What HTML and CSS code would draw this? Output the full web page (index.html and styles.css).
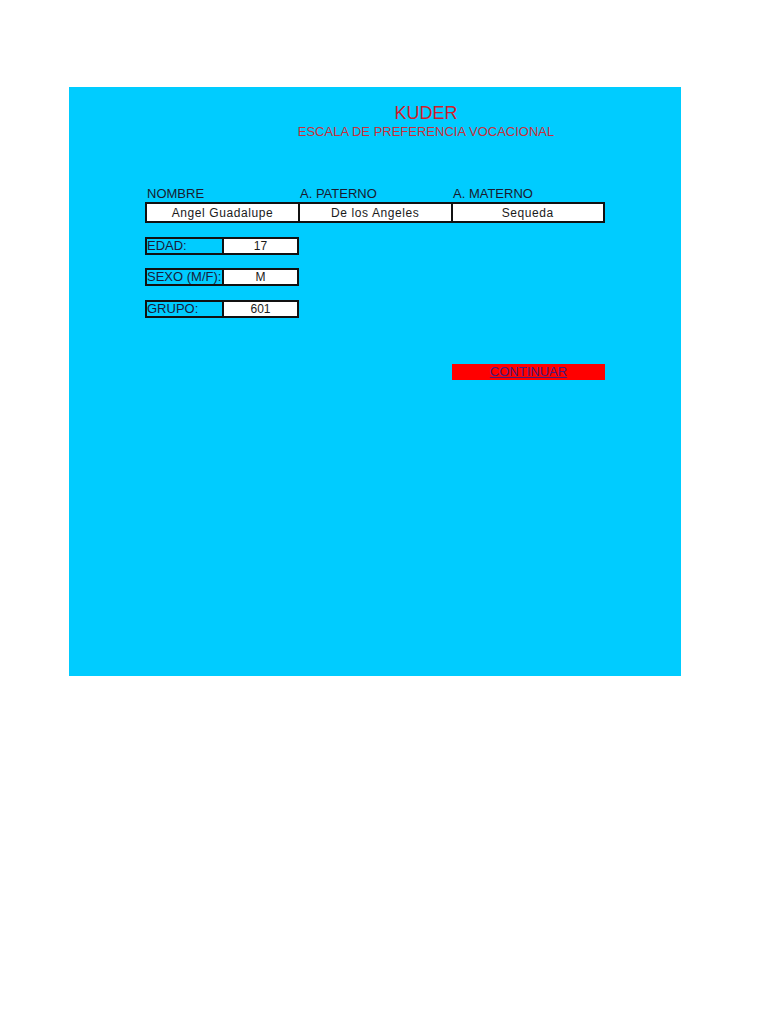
FILE: index.html
```html
<!DOCTYPE html>
<html lang="es">
<head>
<meta charset="utf-8">
<title>KUDER</title>
<link rel="stylesheet" href="styles.css">
</head>
<body>
<div class="panel">
  <div class="title">
    <div class="kuder">KUDER</div>
    <div class="subtitle">ESCALA DE PREFERENCIA VOCACIONAL</div>
  </div>
  <div class="content">
    <div class="labels">
      <div class="lbl">NOMBRE</div>
      <div class="lbl">A. PATERNO</div>
      <div class="lbl">A. MATERNO</div>
    </div>
    <div class="names">
      <div class="cell">Angel Guadalupe</div>
      <div class="cell">De los Angeles</div>
      <div class="cell">Sequeda</div>
    </div>
    <div class="field"><div class="flab">EDAD:</div><div class="fval">17</div></div>
    <div class="field"><div class="flab">SEXO (M/F):</div><div class="fval">M</div></div>
    <div class="field field-last"><div class="flab">GRUPO:</div><div class="fval">601</div></div>
    <div class="actions">
      <a class="continuar" href="#">CONTINUAR</a>
    </div>
  </div>
</div>
</body>
</html>
```

FILE: styles.css
```css
html, body {
  margin: 0;
  padding: 0;
  background: #ffffff;
}
body {
  font-family: "Liberation Sans", Arial, sans-serif;
  color: #1a1a2e;
}
.panel {
  margin-left: 69px;
  margin-top: 87px;
  width: 612px;
  height: 589px;
  background: #00ccff;
  box-sizing: border-box;
  padding-top: 16px;
}
.title {
  width: 300px;
  margin-left: 207px;
  text-align: center;
}
.kuder {
  font-size: 18px;
  line-height: 21px;
  color: #d0202a;
}
.subtitle {
  font-size: 13px;
  line-height: 15px;
  color: #c8303c;
}
.content {
  margin-left: 76px;
  width: 460px;
  margin-top: 47px;
}
.labels {
  display: flex;
  font-size: 13px;
  line-height: 15px;
}
.lbl {
  width: 153px;
  padding-left: 2px;
  box-sizing: border-box;
}
.names {
  display: flex;
  border: 2px solid #111111;
  background: #ffffff;
  height: 21px;
  box-sizing: border-box;
  margin-top: 1px;
}
.cell {
  flex: 1;
  text-align: center;
  font-size: 12px;
  letter-spacing: 0.6px;
  line-height: 17px;
  padding-top: 1px;
  border-left: 2px solid #111111;
  color: #1a1a1a;
}
.cell:first-child {
  border-left: none;
  flex: 0 0 151px;
}
.field {
  display: flex;
  width: 154px;
  height: 18px;
  border: 2px solid #111111;
  box-sizing: border-box;
  margin-top: 14px;
  font-size: 13px;
  line-height: 14px;
}
.field + .field {
  margin-top: 13px;
}
.field + .field-last {
  margin-top: 14px;
}
.flab {
  width: 75px;
  border-right: 2px solid #111111;
  white-space: nowrap;
  overflow: hidden;
  color: #1a1a3a;
}
.fval {
  flex: 1;
  background: #ffffff;
  text-align: center;
  font-size: 12px;
  color: #1a1a1a;
}
.actions {
  display: flex;
  justify-content: flex-end;
  margin-top: 46px;
}
.continuar {
  display: block;
  width: 153px;
  height: 16px;
  background: #ff0000;
  color: #4a1a7a;
  text-align: center;
  font-size: 13px;
  line-height: 15px;
  text-decoration: underline;
}
```
